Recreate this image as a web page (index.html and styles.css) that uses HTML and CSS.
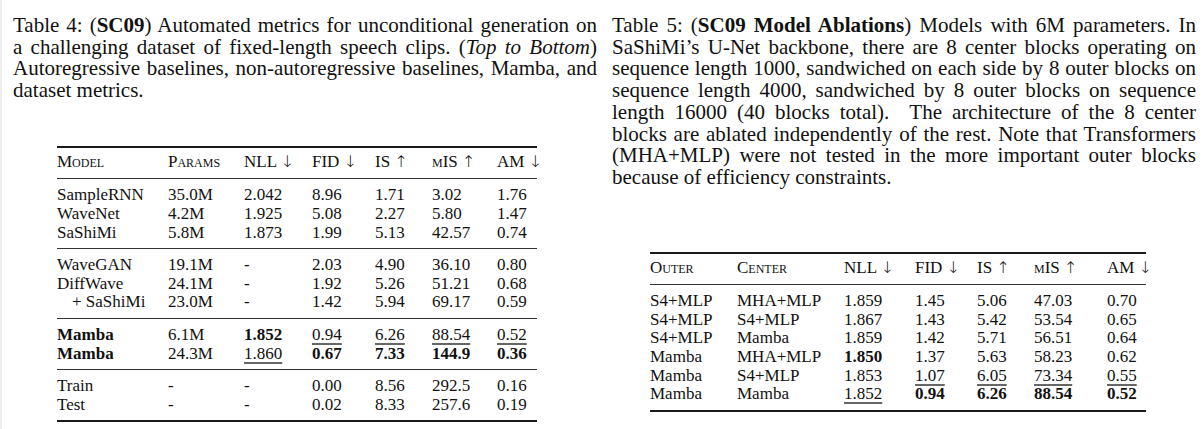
FILE: index.html
```html
<!DOCTYPE html>
<html>
<head>
<meta charset="utf-8">
<link rel="stylesheet" href="styles.css">
</head>
<body>
<div class="page">
  <section class="col col-left">
    <div class="caption">
      <span class="ln">Table 4: (<b>SC09</b>) Automated metrics for unconditional generation on</span>
      <span class="ln">a challenging dataset of fixed-length speech clips. (<i>Top to Bottom</i>)</span>
      <span class="ln">Autoregressive baselines, non-autoregressive baselines, Mamba, and</span>
      <span class="ln end">dataset metrics.</span>
    </div>
    <table class="tbl tbl-left">
      <colgroup>
        <col style="width:111px"><col style="width:76px"><col style="width:68px"><col style="width:63px"><col style="width:57px"><col style="width:65px"><col style="width:40px">
      </colgroup>
      <thead>
        <tr><th class="sc">Model</th><th class="sc">Params</th><th>NLL <span class="arr">↓</span></th><th>FID <span class="arr">↓</span></th><th>IS <span class="arr">↑</span></th><th><span class="sc">m</span>IS <span class="arr">↑</span></th><th>AM <span class="arr">↓</span></th></tr>
      </thead>
      <tbody>
        <tr><td>SampleRNN</td><td>35.0M</td><td>2.042</td><td>8.96</td><td>1.71</td><td>3.02</td><td>1.76</td></tr>
        <tr><td>WaveNet</td><td>4.2M</td><td>1.925</td><td>5.08</td><td>2.27</td><td>5.80</td><td>1.47</td></tr>
        <tr><td>SaShiMi</td><td>5.8M</td><td>1.873</td><td>1.99</td><td>5.13</td><td>42.57</td><td>0.74</td></tr>
      </tbody>
      <tbody>
        <tr><td>WaveGAN</td><td>19.1M</td><td>-</td><td>2.03</td><td>4.90</td><td>36.10</td><td>0.80</td></tr>
        <tr><td>DiffWave</td><td>24.1M</td><td>-</td><td>1.92</td><td>5.26</td><td>51.21</td><td>0.68</td></tr>
        <tr><td class="indent">+ SaShiMi</td><td>23.0M</td><td>-</td><td>1.42</td><td>5.94</td><td>69.17</td><td>0.59</td></tr>
      </tbody>
      <tbody>
        <tr><td><b>Mamba</b></td><td>6.1M</td><td><b>1.852</b></td><td><u>0.94</u></td><td><u>6.26</u></td><td><u>88.54</u></td><td><u>0.52</u></td></tr>
        <tr><td><b>Mamba</b></td><td>24.3M</td><td><u>1.860</u></td><td><b>0.67</b></td><td><b>7.33</b></td><td><b>144.9</b></td><td><b>0.36</b></td></tr>
      </tbody>
      <tbody class="last">
        <tr><td>Train</td><td>-</td><td>-</td><td>0.00</td><td>8.56</td><td>292.5</td><td>0.16</td></tr>
        <tr><td>Test</td><td>-</td><td>-</td><td>0.02</td><td>8.33</td><td>257.6</td><td>0.19</td></tr>
      </tbody>
    </table>
  </section>
  <section class="col col-right">
    <div class="caption">
      <span class="ln">Table 5: (<b>SC09 Model Ablations</b>) Models with 6M parameters. In</span>
      <span class="ln">SaShiMi’s U-Net backbone, there are 8 center blocks operating on</span>
      <span class="ln">sequence length 1000, sandwiched on each side by 8 outer blocks on</span>
      <span class="ln">sequence length 4000, sandwiched by 8 outer blocks on sequence</span>
      <span class="ln">length 16000 (40 blocks total). &nbsp;The architecture of the 8 center</span>
      <span class="ln">blocks are ablated independently of the rest. Note that Transformers</span>
      <span class="ln">(MHA+MLP) were not tested in the more important outer blocks</span>
      <span class="ln end">because of efficiency constraints.</span>
    </div>
    <table class="tbl tbl-right">
      <colgroup>
        <col style="width:87px"><col style="width:107px"><col style="width:71px"><col style="width:62px"><col style="width:57px"><col style="width:73px"><col style="width:39px">
      </colgroup>
      <thead>
        <tr><th class="sc">Outer</th><th class="sc">Center</th><th>NLL <span class="arr">↓</span></th><th>FID <span class="arr">↓</span></th><th>IS <span class="arr">↑</span></th><th><span class="sc">m</span>IS <span class="arr">↑</span></th><th>AM <span class="arr">↓</span></th></tr>
      </thead>
      <tbody class="last">
        <tr><td>S4+MLP</td><td>MHA+MLP</td><td>1.859</td><td>1.45</td><td>5.06</td><td>47.03</td><td>0.70</td></tr>
        <tr><td>S4+MLP</td><td>S4+MLP</td><td>1.867</td><td>1.43</td><td>5.42</td><td>53.54</td><td>0.65</td></tr>
        <tr><td>S4+MLP</td><td>Mamba</td><td>1.859</td><td>1.42</td><td>5.71</td><td>56.51</td><td>0.64</td></tr>
        <tr><td>Mamba</td><td>MHA+MLP</td><td><b>1.850</b></td><td>1.37</td><td>5.63</td><td>58.23</td><td>0.62</td></tr>
        <tr><td>Mamba</td><td>S4+MLP</td><td>1.853</td><td><u>1.07</u></td><td><u>6.05</u></td><td><u>73.34</u></td><td><u>0.55</u></td></tr>
        <tr><td>Mamba</td><td>Mamba</td><td><u>1.852</u></td><td><b>0.94</b></td><td><b>6.26</b></td><td><b>88.54</b></td><td><b>0.52</b></td></tr>
      </tbody>
    </table>
  </section>
</div>
</body>
</html>
```

FILE: styles.css
```css
html, body {
  margin: 0;
  padding: 0;
  background: #ffffff;
}

body {
  width: 1204px;
  height: 429px;
  overflow: hidden;
  font-family: "Liberation Serif", "Times New Roman", serif;
  color: #111111;
  box-sizing: border-box;
  border-left: 2px solid #eeeeee;
}

.page {
  display: flex;
  gap: 15px;
  padding: 15px 8px 0 11px;
}

.col {
  width: 584px;
  flex: 0 0 584px;
  display: flex;
  flex-direction: column;
}

.caption {
  font-size: 21px;
  line-height: 21.7px;
}

.caption .ln {
  display: block;
  text-align: justify;
  text-align-last: justify;
}

.caption .ln.end {
  text-align-last: left;
}

.caption b {
  font-weight: bold;
}

.tbl {
  border-collapse: collapse;
  table-layout: fixed;
  font-size: 17px;
  line-height: 18.6px;
}

.tbl-left {
  width: 480px;
  margin: 44px 0 0 44px;
}

.tbl-right {
  width: 496px;
  margin: 63px 0 0 38px;
}

.tbl th,
.tbl td {
  padding: 0;
  text-align: left;
  font-weight: normal;
  white-space: nowrap;
  vertical-align: baseline;
}

.tbl thead {
  border-top: 2px solid #1a1a1a;
  border-bottom: 1px solid #333333;
}

.tbl thead th {
  padding-top: 5px;
  padding-bottom: 7px;
}

.tbl tbody {
  border-bottom: 1px solid #333333;
}

.tbl tbody.last {
  border-bottom: 2px solid #1a1a1a;
}

.tbl tbody tr:first-child td {
  padding-top: 7px;
}

.tbl tbody tr:last-child td {
  padding-bottom: 6px;
}

.sc {
  font-variant: small-caps;
}

.arr {
  font-family: "DejaVu Sans", sans-serif;
  font-weight: 200;
  font-size: 16px;
  line-height: 1;
}

.indent {
  padding-left: 15px !important;
}

.tbl b {
  font-weight: bold;
}

.tbl u {
  text-decoration: underline;
  text-decoration-color: #666666;
  text-decoration-thickness: 1.5px;
  text-underline-offset: 3px;
}
```
